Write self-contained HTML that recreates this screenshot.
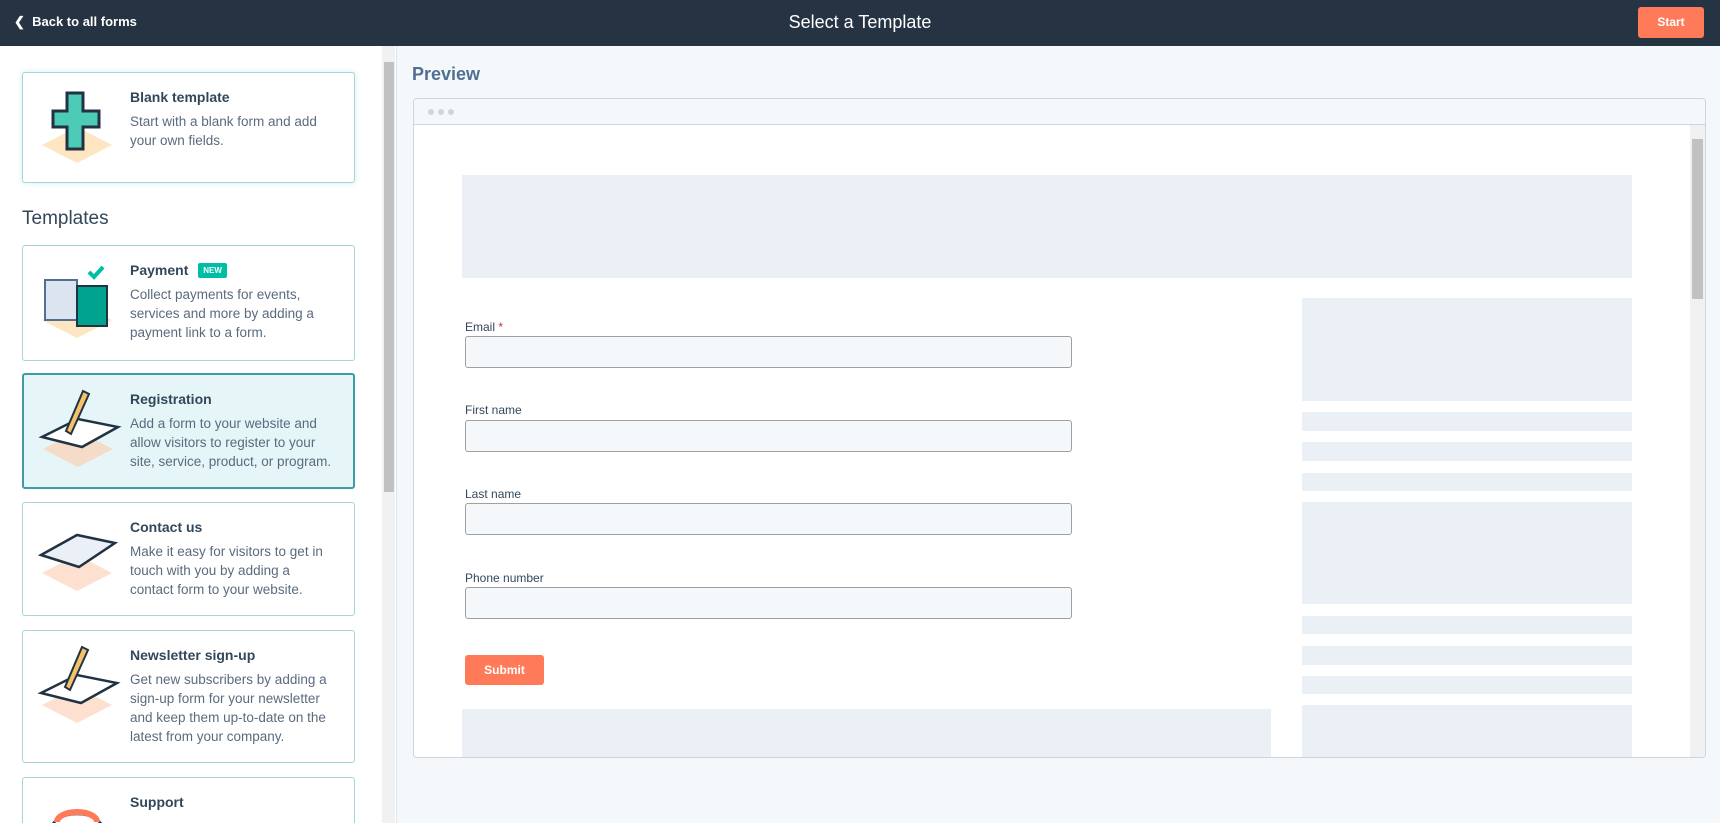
<!DOCTYPE html>
<html><head><style>
*{box-sizing:border-box;margin:0;padding:0}
body{width:1720px;height:823px;overflow:hidden;background:#f5f8fa;font-family:"Liberation Sans",sans-serif;position:relative}
.hdr{position:absolute;left:0;top:0;width:1720px;height:46px;background:#253342;color:#fff}
.back{position:absolute;left:14px;top:14px;font-size:13px;font-weight:bold}
.title{position:absolute;left:0;width:1720px;top:12px;text-align:center;font-size:18px}
.start{position:absolute;left:1638px;top:7px;width:66px;height:31px;background:#ff7a59;border-radius:3px;color:#fff;font-size:12px;font-weight:bold;text-align:center;line-height:31px}
.left{position:absolute;left:0;top:46px;width:397px;height:777px;background:#fff;overflow:hidden;border-right:1px solid #dfe3eb}
.sb{position:absolute;left:382px;top:0;width:13px;height:777px;background:#f1f1f1}
.sb div{position:absolute;left:2px;top:16px;width:10px;height:430px;background:#c1c1c1}
.card{position:absolute;left:22px;width:333px;border:1px solid #a3d5d9;border-radius:3px;background:#fff}
.card.sel{background:#e5f5f8;border:2px solid #3e9ca3}
.card.sel h3,.card.sel p{left:106px}
.card h3{position:absolute;left:107px;top:16px;font-size:14px;color:#33475b}
.card p{position:absolute;left:107px;top:39px;width:205px;font-size:13.5px;line-height:19px;color:#5a6b7e}
.ic{position:absolute;left:14px;top:12px}
.tpl{position:absolute;left:22px;top:162px;font-size:19px;color:#33475b}
.new{display:inline-block;background:#00bda5;color:#fff;font-size:8px;padding:3px 5px;border-radius:2px;vertical-align:2px;margin-left:6px}
.prev{position:absolute;left:412px;top:64px;font-size:18px;font-weight:bold;color:#516f90}
.frame{position:absolute;left:413px;top:98px;width:1293px;height:660px;border:1px solid #cbd6e2;border-radius:4px;background:#fff;overflow:hidden}
.bar{height:26px;background:#f5f8fa;border-bottom:1px solid #cbd6e2}
.dot{position:absolute;top:10px;width:6px;height:6px;border-radius:50%;background:#cbd6e2}
.g{position:absolute;background:#eaf0f6}
.lab{position:absolute;left:51px;font-size:12px;color:#33475b}
.inp{position:absolute;left:51px;width:607px;height:32px;background:#f5f8fa;border:1px solid #a0a0a0;border-radius:3px}
.sub{position:absolute;left:51px;top:556px;width:79px;height:30px;background:#ff7a59;border-radius:3px;color:#fff;font-size:12px;font-weight:bold;text-align:center;line-height:30px}
.isb{position:absolute;left:1276px;top:26px;width:15px;height:634px;background:#f1f1f1}
.isb div{position:absolute;left:2px;top:14px;width:11px;height:160px;background:#c1c1c1}
</style></head><body>
<div class="hdr"><div class="back">&#10094;&nbsp; Back to all forms</div><div class="title">Select a Template</div><div class="start">Start</div></div>
<div class="left">
<div class="card" style="top:26px;height:111px;box-shadow:0 0 6px #cdeef0">
<svg class="ic" width="90" height="90" viewBox="0 0 90 90"><polygon points="5,60 40,42 75,60 40,78" fill="#fde6c1"/><path d="M30 8h16v18h16v16H46v22H30V42H16V26h14z" fill="#4dcbb6" stroke="#213343" stroke-width="3"/></svg>
<h3>Blank template</h3><p>Start with a blank form and add your own fields.</p></div>
<div class="tpl">Templates</div>
<div class="card" style="top:199px;height:116px">
<svg class="ic" width="90" height="90" viewBox="0 0 90 90"><polygon points="5,62 40,44 75,62 40,80" fill="#fde6c1"/><rect x="8" y="22" width="32" height="40" fill="#dbe4ef" stroke="#516f90" stroke-width="2"/><rect x="40" y="28" width="30" height="40" fill="#00a38d" stroke="#213343" stroke-width="2"/><path d="M52 14l5 5 9-10" stroke="#00bda5" stroke-width="4" fill="none"/></svg>
<h3>Payment <span class="new">NEW</span></h3><p>Collect payments for events, services and more by adding a payment link to a form.</p></div>
<div class="card sel" style="top:327px;height:116px">
<svg class="ic" width="90" height="90" viewBox="0 0 90 90"><polygon points="5,62 40,44 75,62 40,80" fill="#f5dcc8"/><polygon points="4,50 40,32 80,40 44,60" fill="#fff" stroke="#213343" stroke-width="2.5"/><path d="M45 4l6 3-18 40-5-3z" fill="#f5c26b" stroke="#213343" stroke-width="2"/></svg>
<h3>Registration</h3><p>Add a form to your website and allow visitors to register to your site, service, product, or program.</p></div>
<div class="card" style="top:456px;height:114px">
<svg class="ic" width="90" height="90" viewBox="0 0 90 90"><polygon points="5,58 40,40 75,58 40,76" fill="#fde0d0"/><polygon points="4,40 40,20 78,28 42,52" fill="#eaf0f6" stroke="#213343" stroke-width="2.5"/><path d="M4 40l38 12 36-24" fill="none" stroke="#213343" stroke-width="2"/></svg>
<h3>Contact us</h3><p>Make it easy for visitors to get in touch with you by adding a contact form to your website.</p></div>
<div class="card" style="top:584px;height:133px">
<svg class="ic" width="90" height="90" viewBox="0 0 90 90"><polygon points="5,62 40,44 75,62 40,80" fill="#fde0d0"/><polygon points="4,50 40,32 80,40 44,60" fill="#fff" stroke="#213343" stroke-width="2.5"/><path d="M45 4l6 3-18 40-5-3z" fill="#f5c26b" stroke="#213343" stroke-width="2"/></svg>
<h3>Newsletter sign-up</h3><p>Get new subscribers by adding a sign-up form for your newsletter and keep them up-to-date on the latest from your company.</p></div>
<div class="card" style="top:731px;height:80px">
<svg class="ic" width="90" height="60" viewBox="0 0 90 60"><ellipse cx="40" cy="40" rx="26" ry="16" fill="#fff" stroke="#213343" stroke-width="2.5"/><path d="M20 32a20 10 0 0 1 40 0" stroke="#ff7a59" stroke-width="6" fill="none"/></svg>
<h3>Support</h3></div>
<div class="sb"><div></div></div>
</div>
<div class="prev">Preview</div>
<div class="frame"><div class="bar"></div>
<div class="dot" style="left:14px"></div><div class="dot" style="left:24px"></div><div class="dot" style="left:34px"></div>
<div class="g" style="left:48px;top:76px;width:1170px;height:103px"></div>
<div class="lab" style="top:221px">Email <span style="color:#c33">*</span></div><div class="inp" style="top:237px"></div>
<div class="lab" style="top:304px">First name</div><div class="inp" style="top:321px"></div>
<div class="lab" style="top:388px">Last name</div><div class="inp" style="top:404px"></div>
<div class="lab" style="top:472px">Phone number</div><div class="inp" style="top:488px"></div>
<div class="sub">Submit</div>
<div class="g" style="left:48px;top:610px;width:809px;height:60px"></div>
<div class="g" style="left:888px;top:199px;width:330px;height:103px"></div>
<div class="g" style="left:888px;top:313px;width:330px;height:19px"></div>
<div class="g" style="left:888px;top:343px;width:330px;height:19px"></div>
<div class="g" style="left:888px;top:374px;width:330px;height:18px"></div>
<div class="g" style="left:888px;top:403px;width:330px;height:102px"></div>
<div class="g" style="left:888px;top:517px;width:330px;height:18px"></div>
<div class="g" style="left:888px;top:547px;width:330px;height:19px"></div>
<div class="g" style="left:888px;top:577px;width:330px;height:18px"></div>
<div class="g" style="left:888px;top:606px;width:330px;height:60px"></div>
<div class="isb"><div></div></div>
</div>
</body></html>
